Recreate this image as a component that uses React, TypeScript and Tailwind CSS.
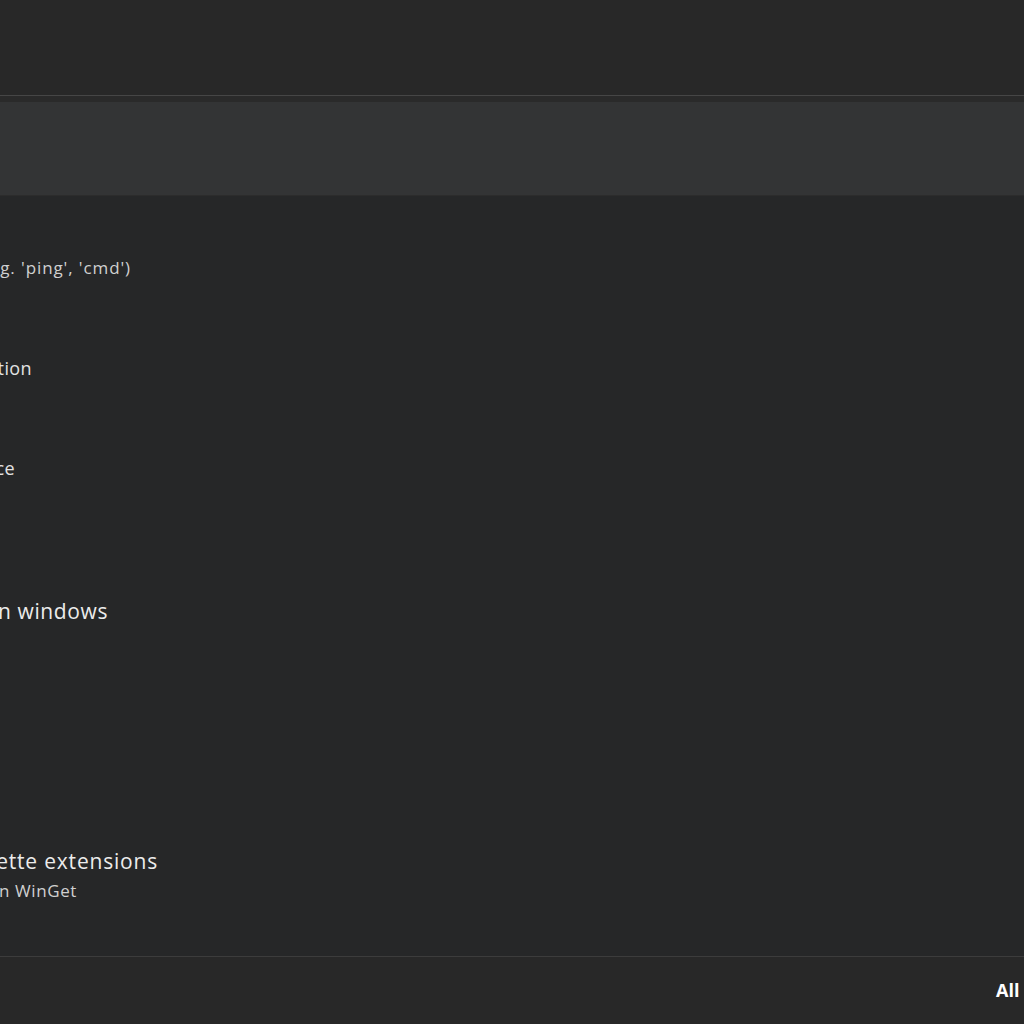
import * as React from 'react';

/**
 * Command palette window, cropped: only the right-hand tails of the
 * list entries are on screen, so each row is right-anchored at the
 * x where its text ends and overflows off the left edge.
 */

type TailProps = {
  className: string; // width of the anchor box + text styles
  children: React.ReactNode;
};

// flex + justify-end lets the text overflow on the start (left) side
function Tail({ className, children }: TailProps) {
  return (
    <div className={`flex justify-end whitespace-nowrap ${className}`}>
      <span>{children}</span>
    </div>
  );
}

export default function App() {
  return (
    <div
      className="w-[1024px] h-[1024px] overflow-hidden flex flex-col bg-[#262728] text-[#e4e4e4]"
      style={{ fontFamily: '"Open Sans", "Noto Sans", sans-serif' }}
    >
      {/* Title / drag area */}
      <div className="h-[96px] shrink-0 bg-[#282828] border-b border-[#464646]" />

      {/* Search box */}
      <div className="h-[100px] shrink-0 pt-[6px] bg-[#2a2a2a]">
        <div className="h-full bg-[#333435] border-b border-[#2c2c2c]" />
      </div>

      {/* Results list */}
      <div className="flex-1 flex flex-col pt-[22px] bg-[#262728]">
        <div className="h-[100px] flex items-center">
          <Tail className="w-[131px] text-[17px] tracking-[0.9px] font-medium text-[#d0d0d0]">Run commands (e.g. 'ping', 'cmd')</Tail>
        </div>
        <div className="h-[100px] flex items-center">
          <Tail className="w-[32px] text-[18px] tracking-[0.4px] font-medium text-[#e2e2e2]">Windows Settings navigation</Tail>
        </div>
        <div className="h-[100px] flex items-center">
          <Tail className="w-[15px] text-[18px] tracking-[0.4px] font-medium text-[#e2e2e2]">Open Windows Service</Tail>
        </div>

        <div className="h-[100px] mt-[44px] flex items-center">
          <Tail className="w-[108px] text-[21px] tracking-[0.6px] font-medium text-[#ececec]">Switch between open windows</Tail>
        </div>

        <div className="mt-[186px] flex flex-col gap-[6px]">
          <Tail className="w-[158px] text-[21px] tracking-[0.8px] font-medium leading-[26px] text-[#ececec]">
            Discover Command Palette extensions
          </Tail>
          <Tail className="w-[77px] text-[17px] tracking-[0.6px] font-medium leading-[22px] text-[#d0d0d0]">Search for extensions on WinGet</Tail>
        </div>
      </div>

      {/* Footer */}
      <div className="h-[68px] shrink-0 bg-[#282828] border-t border-[#3c3c3c] flex items-center">
        <div className="pl-[996px] whitespace-nowrap text-[18px] font-bold text-white">All extensions</div>
      </div>
    </div>
  );
}
